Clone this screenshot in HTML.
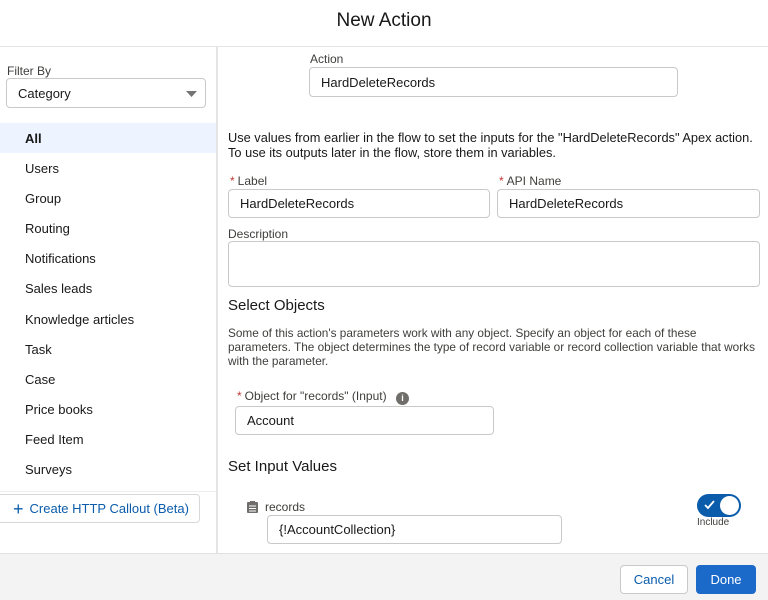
<!DOCTYPE html>
<html><head><style>
*{box-sizing:border-box;margin:0;padding:0}
body{width:768px;height:600px;overflow:hidden;background:#fff;font-family:"Liberation Sans",sans-serif;color:#181818;position:relative;font-size:13px}
.abs{position:absolute}
.inp{position:absolute;border:1px solid #c9c9c9;border-radius:4px;background:#fff;font-size:13px;padding-left:11px;display:flex;align-items:center}
.lbl{position:absolute;font-size:12px;color:#3e3e3c}
.req{color:#c23934;margin-right:3px}
.nav{position:absolute;left:25px;font-size:13px}
</style></head><body>
<div class="abs" style="left:0;top:0;width:768px;height:47px;border-bottom:1px solid #e5e5e5;text-align:center;font-size:19px;line-height:42px">New Action</div>
<div class="abs" style="left:216px;top:47px;width:2px;height:506px;background:#e5e5e5"></div>
<div class="lbl" style="left:7px;top:64px">Filter By</div>
<div class="inp" style="left:6px;top:78px;width:200px;height:30px">Category<svg class="abs" style="right:8px;top:12px" width="11" height="6"><path d="M0 0h11L5.5 6z" fill="#747474"/></svg></div>
<div class="abs" style="left:0;top:123px;width:216px;height:30px;background:#eef4ff"></div>
<div class="nav" style="top:131px;font-weight:bold">All</div>
<div class="nav" style="top:161px">Users</div>
<div class="nav" style="top:191px">Group</div>
<div class="nav" style="top:221px">Routing</div>
<div class="nav" style="top:251px">Notifications</div>
<div class="nav" style="top:281px">Sales leads</div>
<div class="nav" style="top:312px">Knowledge articles</div>
<div class="nav" style="top:342px">Task</div>
<div class="nav" style="top:372px">Case</div>
<div class="nav" style="top:402px">Price books</div>
<div class="nav" style="top:432px">Feed Item</div>
<div class="nav" style="top:462px">Surveys</div>
<div class="abs" style="left:0;top:491px;width:216px;height:1px;background:#eee"></div>
<div class="abs" style="left:-4px;top:494px;width:204px;height:29px;border:1px solid #d8d8d8;border-radius:4px;color:#0b5cab;font-size:13px;line-height:27px;padding-left:16px"><span style="font-size:18px;vertical-align:-2px;margin-right:6px">+</span>Create HTTP Callout (Beta)</div>

<div class="lbl" style="left:310px;top:52px">Action</div>
<div class="inp" style="left:309px;top:67px;width:369px;height:30px">HardDeleteRecords</div>
<div class="abs" style="left:228px;top:130px;font-size:12.8px;line-height:15px;width:545px;white-space:nowrap">Use values from earlier in the flow to set the inputs for the "HardDeleteRecords" Apex action.<br>To use its outputs later in the flow, store them in variables.</div>
<div class="lbl" style="left:230px;top:174px"><span class="req">*</span>Label</div>
<div class="inp" style="left:228px;top:189px;width:262px;height:29px">HardDeleteRecords</div>
<div class="lbl" style="left:499px;top:174px"><span class="req">*</span>API Name</div>
<div class="inp" style="left:497px;top:189px;width:263px;height:29px">HardDeleteRecords</div>
<div class="lbl" style="left:228px;top:227px">Description</div>
<div class="inp" style="left:228px;top:241px;width:532px;height:46px"></div>
<div class="abs" style="left:228px;top:297px;font-size:15px">Select Objects</div>
<div class="abs" style="left:228px;top:326px;font-size:11.8px;line-height:14px;white-space:nowrap;color:#3e3e3c">Some of this action's parameters work with any object. Specify an object for each of these<br>parameters. The object determines the type of record variable or record collection variable that works<br>with the parameter.</div>
<div class="lbl" style="left:237px;top:389px"><span class="req">*</span>Object for "records" (Input)</div>
<div class="abs" style="left:396px;top:392px;width:13px;height:13px;border-radius:50%;background:#706e6b;color:#fff;font-size:9px;font-weight:bold;text-align:center;line-height:13px">i</div>
<div class="inp" style="left:235px;top:406px;width:259px;height:29px">Account</div>
<div class="abs" style="left:228px;top:458px;font-size:15px">Set Input Values</div>
<svg class="abs" style="left:247px;top:501px" width="11" height="12"><rect x="0" y="1" width="11" height="11" rx="1" fill="#706e6b"/><rect x="3" y="0" width="5" height="3" fill="#706e6b"/><path d="M2 5h7M2 7.5h7M2 10h7" stroke="#fff" stroke-width="1"/></svg>
<div class="abs" style="left:265px;top:500px;font-size:12px;color:#3e3e3c">records</div>
<div class="inp" style="left:267px;top:515px;width:295px;height:29px">{!AccountCollection}</div>
<div class="abs" style="left:697px;top:494px;width:44px;height:23px;border-radius:12px;background:#0b5cab"><div class="abs" style="right:2px;top:2px;width:19px;height:19px;border-radius:50%;background:#fff"></div><svg class="abs" style="left:7px;top:6px" width="11" height="10"><path d="M1 5l3 3 6-7" stroke="#fff" stroke-width="1.8" fill="none"/></svg></div>
<div class="abs" style="left:697px;top:517px;font-size:10px;color:#3e3e3c">Include</div>

<div class="abs" style="left:0;top:553px;width:768px;height:47px;background:#f3f3f3;border-top:1px solid #e0e0e0"></div>
<div class="abs" style="left:620px;top:565px;width:68px;height:29px;border:1px solid #c9c9c9;border-radius:4px;background:#fff;color:#0b5cab;text-align:center;line-height:27px">Cancel</div>
<div class="abs" style="left:696px;top:565px;width:60px;height:29px;border-radius:4px;color:#fff;text-align:center;line-height:29px;background:#1b6ac9">Done</div>
</body></html>
